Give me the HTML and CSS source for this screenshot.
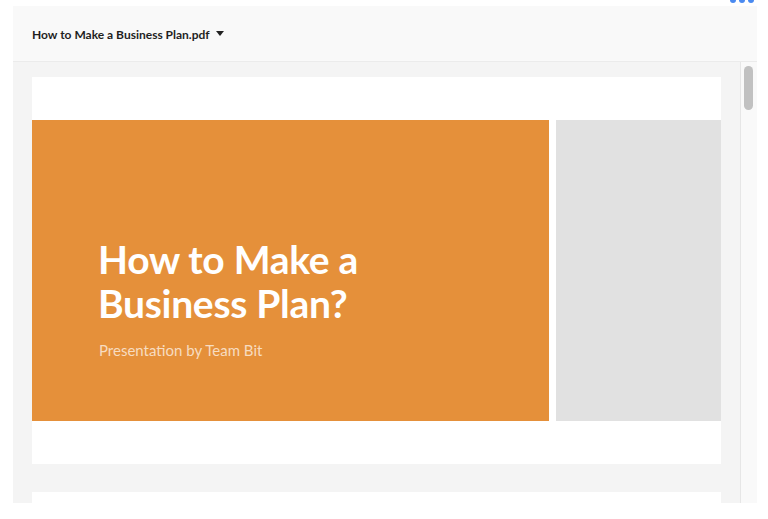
FILE: index.html
```html
<!DOCTYPE html>
<html>
<head>
<meta charset="utf-8">
<link rel="stylesheet" href="styles.css">
</head>
<body>
<div class="dots"><span></span><span></span><span></span></div>
<div class="viewer">
  <div class="header">
    <span class="filename">How to Make a Business Plan.pdf</span>
    <span class="caret"></span>
  </div>
  <div class="body">
    <div class="pages">
      <div class="page">
        <div class="slide-row">
          <div class="slide">
            <h1 class="slide-title">How to Make a<br>Business Plan?</h1>
            <p class="slide-sub">Presentation by Team Bit</p>
          </div>
          <div class="side"></div>
        </div>
      </div>
      <div class="page page2"></div>
    </div>
    <div class="scrollbar"><div class="thumb"></div></div>
  </div>
</div>
</body>
</html>
```
FILE: styles.css
```css
html, body { margin: 0; padding: 0; background: #fff; }
body { font-family: Lato, "Open Sans", sans-serif; width: 768px; height: 519px; overflow: hidden; position: relative; }
.dots { position: absolute; top: -3px; left: 730px; display: flex; gap: 3px; }
.dots span { width: 6px; height: 6px; border-radius: 50%; background: #4a8af0; display: block; }
.viewer { margin: 6px 11px 0 13px; height: 497px; display: flex; flex-direction: column; }
.header { height: 55px; background: #f9f9f9; border-bottom: 1px solid #ebebeb; display: flex; align-items: center; padding-left: 19px; gap: 6px; flex-shrink: 0; }
.filename { font-size: 12px; font-weight: 700; color: #1f1f1f; margin-top: 1px; }
.caret { width: 0; height: 0; border-left: 4px solid transparent; border-right: 4px solid transparent; border-top: 5px solid #222; margin-top: -1px; }
.body { flex: 1; display: flex; background: #f4f4f4; overflow: hidden; }
.pages { flex: 1; padding: 15px 19px 0 19px; display: flex; flex-direction: column; gap: 28px; }
.page { background: #fff; height: 387px; padding-top: 43px; box-sizing: border-box; flex-shrink: 0; }
.slide-row { display: flex; gap: 7px; height: 301px; }
.slide { width: 517px; background: #e5903a; box-sizing: border-box; padding: 117px 0 0 66px; }
.slide-title { margin: 0; color: #fff; font-size: 39px; font-weight: 700; line-height: 44px; letter-spacing: -0.3px; }
.slide-sub { margin: 16px 0 0 1px; color: #f7dcc0; font-size: 15px; }
.side { flex: 1; background: #e1e1e1; }
.scrollbar { width: 16px; border-left: 1px solid #e6e6e6; background: #f9f9f9; flex-shrink: 0; position: relative; }
.thumb { position: absolute; left: 3px; top: 4px; width: 9px; height: 44px; border-radius: 5px; background: #c1c1c1; }
```
